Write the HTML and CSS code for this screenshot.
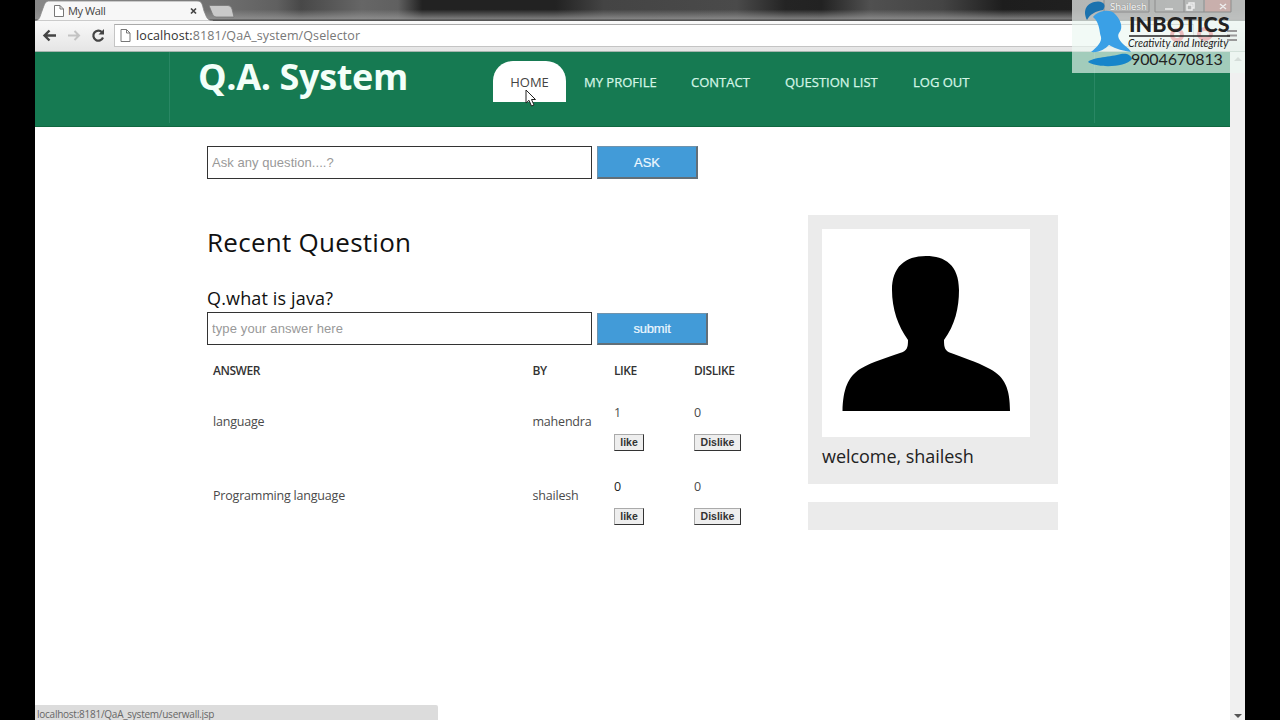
FILE: index.html
```html
<!DOCTYPE html>
<html lang="en">
<head>
<meta charset="utf-8">
<title>My Wall</title>
<link rel="stylesheet" href="styles.css">
</head>
<body>
<div class="window">
  <div class="tabstrip">
    <svg class="tabs" width="210" height="21" viewBox="0 0 210 21">
      <path d="M0 21C5 20 5 16 7 11C10 3 10 1 15 1H162C167 1 167 4 169 11C172 18 172 20 178 21Z" fill="#f7f7f7" stroke="#888" stroke-width=".8"/>
      <path d="M174 5.500H193Q196 5.500 197 9L199 17H181Q178 17 177 13Z" fill="#c9c9c9" stroke="#777" stroke-width=".8"/>
      <path d="M19.500 5.500H25L28.500 9V16.500H19.500ZM25 5.500V9H28.500" fill="#fff" stroke="#777"/>
      <path d="M156 8.500L161 13.500M161 8.500L156 13.500" stroke="#444" stroke-width="1.700"/>
    </svg>
    <span class="tab-title">My Wall</span>
  </div>
  <div class="toolbar">
    <svg width="76" height="28" viewBox="0 0 76 28" fill="none">
      <path d="M21 14.500H10M14.500 9.500L9.500 14.500L14.500 19.500" stroke="#444" stroke-width="2.400"/>
      <path d="M33 14.500H43M39.500 10L44 14.500L39.500 19" stroke="#c3c3c3" stroke-width="2"/>
      <path d="M67 11.200A5 5 0 1 0 68 16.500" stroke="#444" stroke-width="2.200"/><path d="M69 8V13.500H63.500Z" fill="#444"/>
    </svg>
    <div class="address">
      <svg width="11" height="13" viewBox="0 0 11 13"><path d="M1 .5H6.500L10 4V12.500H1ZM6.500 .5V4H10" fill="#fff" stroke="#777"/></svg>
      <span class="url"><b>localhost:</b>8181/QaA_system/Qselector</span>
    </div>
  </div>
  <div class="viewport">
    <div class="page">
      <header class="header">
        <div class="header-inner">
          <h1 class="brand">Q.A. System</h1>
          <nav class="nav">
            <a class="home">HOME</a><a class="profile">MY PROFILE</a><a class="contact">CONTACT</a><a class="list">QUESTION LIST</a><a class="logout">LOG OUT</a>
          </nav>
        </div>
      </header>
      <div class="content">
        <main class="main">
          <form class="ask"><input type="text" placeholder="Ask any question....?"><button type="button" class="ask-btn">ASK</button></form>
          <h2 class="recent">Recent Question</h2>
          <h3 class="question">Q.what is java?</h3>
          <form class="reply"><input type="text" placeholder="type your answer here"><button type="button" class="submit-btn">submit</button></form>
          <div class="answers">
            <div class="row head"><span>ANSWER</span><span>BY</span><span>LIKE</span><span>DISLIKE</span></div>
            <div class="row">
              <span class="name">language</span><span class="name">mahendra</span>
              <div class="vote"><span>1</span><button type="button" class="like">like</button></div>
              <div class="vote"><span>0</span><button type="button" class="dislike">Dislike</button></div>
            </div>
            <div class="row">
              <span class="name">Programming language</span><span class="name">shailesh</span>
              <div class="vote"><span class="dark">0</span><button type="button" class="like">like</button></div>
              <div class="vote"><span>0</span><button type="button" class="dislike">Dislike</button></div>
            </div>
          </div>
        </main>
        <aside class="side">
          <div class="card">
            <svg class="avatar" width="208" height="208" viewBox="0 0 208 208"><rect width="208" height="208" fill="#fff"/><path d="M104 27C123 27 137 36 137 61C137 79 133 96 122 111C122 119 123 122 129 124C142 129 153 132 168 140C183 148 188 160 188 182H20.500C21 160 26 148 38 140C52 132 64 129 78 124C85 122 86 119 86 111C76 97 70 80 70 61C70 38 83 27 104 27Z"/></svg>
            <p class="welcome">welcome, shailesh</p>
          </div>
          <div class="card empty"></div>
        </aside>
      </div>
    </div>
    <div class="scrollbar"><i class="up"></i><i class="down"></i></div>
  </div>
  <div class="status"><span>localhost:8181/QaA_system/userwall.jsp</span></div>
  <svg class="cursor" width="12" height="19" viewBox="0 0 12 19"><path d="M1 1V14L4 11.300L6.500 17L9 16L6.500 10.500H10.500Z" fill="#fff" stroke="#222"/></svg>
  <div class="watermark">
    <svg width="173" height="73" viewBox="0 0 173 73">
      <path d="M0 0H173V20H0Z" fill="#b9b9b9" opacity=".75"/>
      <path d="M133 0H159V12H133Z" fill="#d3a9a4" opacity=".6"/>
      <g fill="none" stroke="#8d8d8d"><path d="M32 0V12H77V0M83 0V12H159V0M112 0V12M132 0V12"/></g>
      <g fill="none" stroke="#eee" stroke-width="1.500"><path d="M93 9H101M115 5H120V10H115ZM117 5V3H122V8H120M148 4L154 9M154 4L148 9"/></g>
      <g fill="none" stroke="#e58a90" opacity=".55" stroke-width="4"><circle cx="105" cy="35" r="5"/><ellipse cx="133" cy="34" rx="6" ry="5"/></g>
      <path d="M155 31H165M155 35.500H165M155 40H165" stroke="#999" stroke-width="2"/>
      <path d="M15 20C10 10 15 2 26 1.500C33 2 34 6 31 10C24 11 18 14 15 20Z" fill="#1c72ae"/>
      <path d="M21 17C25 11 38 8 43 14C48 19 52 27 47 33C45 36 47 40 51 44C54 47 57 48 59 52C52 51 44 49 37 45C33 49 27 53 19 52C25 47 30 42 29 37C27 31 28 23 21 17Z" fill="#3aa0e6"/>
      <path d="M16 62C21 57 39 57 49 54C55 53 59 55 60 59C53 68 25 68 16 62Z" fill="#1685ca"/>
      <path d="M57 36H158" stroke="#222" stroke-width="1.500"/>
    </svg>
    <span class="user">Shailesh</span><span class="wm-name">INBOTICS</span><span class="wm-tag">Creativity and Integrity</span><span class="wm-phone">9004670813</span>
  </div>
</div>
</body>
</html>
```
FILE: styles.css
```css
* { box-sizing: border-box; }
body { margin: 0; height: 720px; background: #000; overflow: hidden; font-family: "Open Sans", sans-serif; }
h1, h2, h3, p { margin: 0; font-weight: 400; }
span, a, h1, h2, h3, p { white-space: nowrap; }
.window { position: relative; width: 1210px; height: 720px; margin-left: 35px; background: #fff; overflow: hidden; display: flex; flex-direction: column; }
.tabstrip { position: relative; height: 21px; flex: none; background: linear-gradient(rgba(120,120,120,0) 45%, rgba(150,150,150,.75) 88%, #555 96%), linear-gradient(90deg, #888 0, #707070 15%, #606060 20%, #484848 22%, #666 27%, #606060 30%, #222 32%, #222 43%, #444 47%, #4a4a4a 58%, #242424 62%, #222 65%, #505050 69%, #444 75%, #1d1d1d 80%, #222 92%, #555 100%); }
.tabs { display: block; }
.tab-title { position: absolute; left: 33px; top: 3px; font-size: 11px; line-height: 15px; color: #444; letter-spacing: -.4px; }
.toolbar { display: flex; height: 31px; flex: none; background: linear-gradient(#f9f9f9, #e5e5e5); border-bottom: 1px solid #a5b5ae; }
.address { margin: 3px 0 0 3px; width: 1080px; height: 23px; background: #fff; border: 1px solid #c4c4c4; border-top-color: #aaa; display: flex; align-items: center; padding-left: 5px; gap: 5px; }
.url { font-size: 12.500px; color: #777; letter-spacing: .1px; }
.url b { font-weight: 400; color: #333; }
.viewport { display: flex; flex: 1; }
.page { width: 1195px; }
.header { height: 75px; background: #167a52; border-bottom: 1px solid #106840; }
.header-inner { display: flex; width: 926px; height: 71px; margin-left: 134px; padding-left: 28px; border: solid #298764; border-width: 0 1px; }
.brand { width: 295px; font: 700 36px/50px "Open Sans", sans-serif; letter-spacing: -.35px; color: #f3fff9; }
.nav { display: flex; margin-top: 9px; font-size: 13px; line-height: 42px; color: #d4f5e6; -webkit-text-stroke: .25px; }
.nav a { height: 41px; }
.nav .home { width: 73px; margin-right: 18px; text-align: center; background: #fff; color: #444; border-radius: 20px 20px 0 0; -webkit-text-stroke: 0; }
.profile { width: 107px; } .contact { width: 94px; } .list { width: 128px; }
.content { display: flex; padding-left: 172px; }
.main { width: 601px; padding-top: 19px; }
form { display: flex; gap: 5px; }
input { width: 385px; height: 33px; border: 1px solid #333; padding: 0 4px 1px; font: 13px "Liberation Sans", sans-serif; letter-spacing: .05px; }
.reply input { letter-spacing: .12px; }
input::placeholder { color: #999; opacity: 1; }
.ask-btn, .submit-btn { height: 33px; width: 101px; padding: 0; background: #429bd8; border: 1px solid #6f93ad; border-right: 2px solid #626f78; border-bottom: 2px solid #626f78; color: #edf8ff; font: 13px "Liberation Sans", sans-serif; -webkit-text-stroke: .2px; }
.submit-btn { width: 111px; height: 32px; margin-top: 1px; padding-bottom: 1px; letter-spacing: -.2px; }
.recent { font-size: 26px; line-height: 36px; margin-top: 45px; letter-spacing: .27px; color: #111; }
.question { font-size: 18px; line-height: 26px; margin: 25px 0 1px; letter-spacing: .15px; color: #111; }
.answers { margin-top: 11px; padding-left: 6px; color: #4a4a4a; font-size: 12.500px; }
.row { display: grid; grid-template-columns: 319.5px 81.5px 80px 80px; height: 74px; }
.row.head { height: 42px; font-weight: 600; font-size: 12px; line-height: 30px; letter-spacing: -.45px; color: #333; }
.name { line-height: 47px; letter-spacing: -.2px; }
.vote { display: flex; flex-direction: column; align-items: flex-start; gap: 12px; padding-top: 6px; line-height: 18px; }
.dark { color: #222; }
.vote button { height: 17px; padding: 0; background: #eee; border: 1px solid #aaa; border-right-color: #333; border-bottom-color: #333; color: #333; font: 700 10.500px/13px "Liberation Sans", sans-serif; }
.like { width: 30px; } .dislike { width: 47px; }
.side { width: 250px; padding-top: 88px; }
.card { height: 269px; background: #ebebeb; padding: 14px; }
.avatar { display: block; }
.welcome { font-size: 18px; line-height: 39px; letter-spacing: -.05px; color: #222; }
.empty { height: 28px; margin-top: 18px; }
.scrollbar { width: 15px; background: #f0f0f0; display: flex; flex-direction: column; align-items: center; justify-content: space-between; padding: 5px 0 2px; }
.up, .down { border: 4px solid transparent; }
.up { border-top: 0; border-bottom: 4px solid #aaa; }
.down { border-bottom: 0; border-top: 4px solid #555; }
.status { position: absolute; left: 0; bottom: 0; width: 403px; height: 15px; padding-left: 2px; background: #dcdcdc; border-top-right-radius: 2px; font-size: 10px; line-height: 19px; letter-spacing: -.25px; color: #666; }
.cursor { position: absolute; left: 490px; top: 89px; }
.watermark { position: absolute; left: 1037px; top: 0; width: 173px; height: 73px; background: rgba(235,247,242,.66); }
.watermark svg { display: block; }
.watermark span { position: absolute; }
.user { left: 38px; top: 1px; font: 9.500px/12px "Open Sans", sans-serif; color: #fff; text-shadow: 0 0 1px #666; }
.wm-name { left: 57px; top: 14px; font: 900 21.500px/20px Lato, sans-serif; letter-spacing: .1px; color: #222; }
.wm-tag { left: 56px; top: 37px; font: italic 10.500px/12px Lato, sans-serif; color: #222; }
.wm-phone { left: 59px; top: 49px; font: 16px/20px Lato, sans-serif; letter-spacing: -.1px; color: #222; }
```
